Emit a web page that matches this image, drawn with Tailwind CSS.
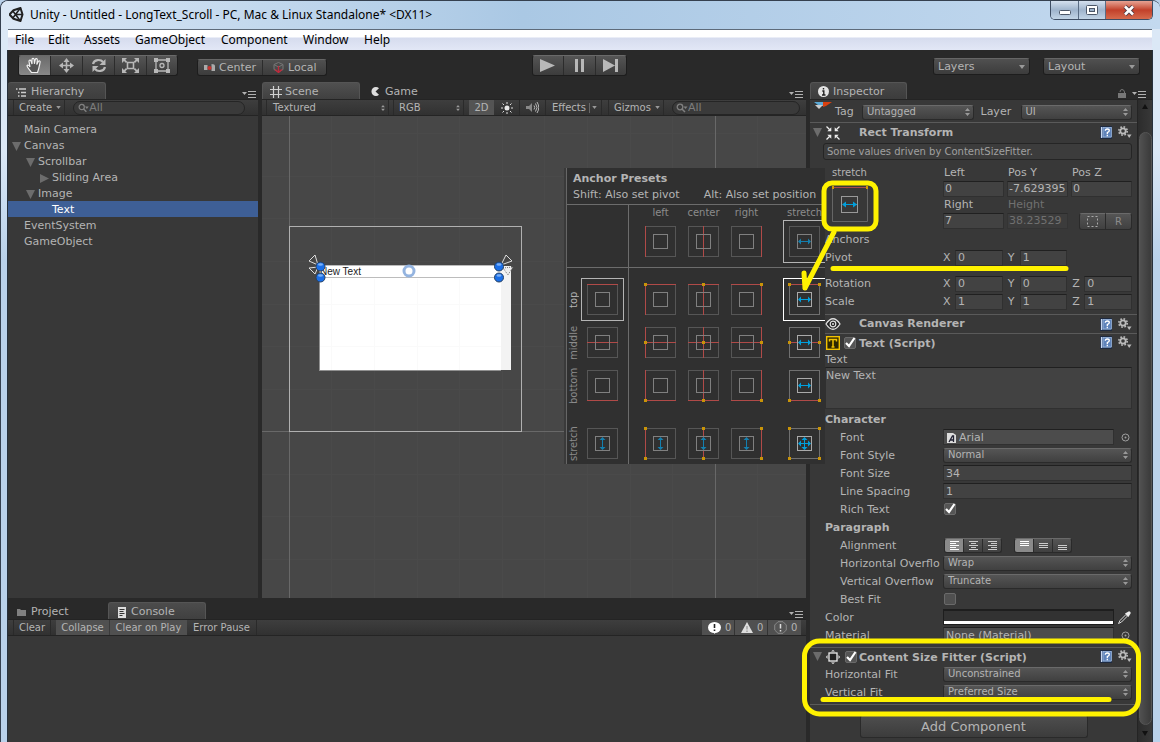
<!DOCTYPE html>
<html lang="en">
<head>
<meta charset="utf-8">
<title>Unity - Untitled - LongText_Scroll</title>
<script src="https://cdn.jsdelivr.net/npm/@tailwindcss/browser@4"></script>
</head>
<body class="bg-[#b9d1ea]">
<svg class="hidden" aria-hidden="true">
  <symbol id="updown" viewBox="0 0 5 8"><path d="M0 3 2.500 0 5 3zM0 5h5L2.500 8z" fill="#999"/></symbol>
  <symbol id="caret" viewBox="0 0 6 4"><path d="M0 0h6L3 4z" fill="#999"/></symbol>
  <symbol id="panelmenu" viewBox="0 0 14 7"><path d="M0 1h5L2.500 4z" fill="#b0b0b0"/><path d="M6 .5h8M6 3.500h8M6 6.500h8" stroke="#b0b0b0"/></symbol>
  <symbol id="foldopen" viewBox="0 0 9 9"><path d="M0 0h9L4.500 9z" fill="#6c6c6c"/></symbol>
  <symbol id="foldclosed" viewBox="0 0 9 9"><path d="M0 0v9L9 4.500z" fill="#6c6c6c"/></symbol>
  <symbol id="check" viewBox="0 0 12 12"><path d="M2 6 5 9 10.500 1" fill="none" stroke="#fff" stroke-width="2.200"/></symbol>
  <symbol id="book" viewBox="0 0 12 13"><rect x=".5" y=".5" width="11" height="12" fill="#47648f" stroke="#1e2a40"/><path d="M1.500 1v11" stroke="#c8d8f0" stroke-width="1.200"/><rect x="3" y="1.500" width="8.500" height="9.500" fill="#5f83ba" stroke="#a9c2e6" stroke-width=".7"/><path d="M5.300 4.800q0-1.800 2-1.800t2 1.700q0 1-2 1.900v1.400M7.300 8.800v1.400" stroke="#fff" fill="none" stroke-width="1.300"/></symbol>
  <symbol id="gear" viewBox="0 0 14 13"><circle cx="5" cy="5" r="2.700" fill="none" stroke="#bcbcbc" stroke-width="1.800"/><circle cx="5" cy="5" r="4.200" fill="none" stroke="#bcbcbc" stroke-width="1.600" stroke-dasharray="1.700 1.600"/><path d="M9 8.500h4.500L11.200 12z" fill="#bcbcbc"/></symbol>
  <symbol id="search" viewBox="0 0 12 10"><circle cx="4" cy="4" r="2.800" fill="none" stroke="#808080" stroke-width="1.300"/><path d="M6 6l3 3" stroke="#808080" stroke-width="1.500"/><path d="M7.500 3.500h4L9.500 6z" fill="#808080"/></symbol>
  <symbol id="target" viewBox="0 0 9 9"><circle cx="4.500" cy="4.500" r="3.500" fill="none" stroke="#a0a0a0"/><circle cx="4.500" cy="4.500" r="1" fill="#a0a0a0"/></symbol>
</svg>

<div class="relative flex h-screen w-full flex-col overflow-hidden rounded-t-lg border-t border-l border-[#35404f] bg-linear-to-b from-[#dbe8f6] from-20% via-[#b9d1ea] via-35% to-[#b9d1ea] pr-2 pl-[7px] font-['DejaVu_Sans',sans-serif] text-[11px] leading-4 text-[#b4b4b4]">

  <!-- window title -->
  <header class="-mr-2 -ml-[7px] flex h-7 shrink-0 items-start bg-linear-to-r from-[#dbe8f6] via-[#aac8e4] via-45% to-[#c3d9ef] pl-2">
    <svg class="mt-[6px] h-[15px] w-[15px]" viewBox="0 0 15 15"><path d="M.5 7.500 4.500 3.200 11.500 1l2 6.500-2 6.500-7-2.200z" fill="none" stroke="#222" stroke-width="2" stroke-linejoin="round"/><path d="M5.500 7.500H.8M5.500 7.500l5.800-6M5.500 7.500l5.800 6" stroke="#222" stroke-width="0"/><path d="M13 7.500H6.500M6.500 7.500 3.500 3.500M6.500 7.500l-3 4M6.500 7.500 11 1.500M6.500 7.500 11 13.500" stroke="#222" stroke-width="1.600"/></svg>
    <h1 class="mt-[5px] ml-1.5 flex-1 whitespace-nowrap font-['Noto_Sans',sans-serif] text-xs leading-[18px] text-black">Unity - Untitled - LongText_Scroll - PC, Mac &amp; Linux Standalone* &lt;DX11&gt;</h1>
    <div class="mr-[7px] flex h-[19px] overflow-hidden rounded-b-[5px] border border-t-0 border-[#3e4d63]">
      <button aria-label="Minimize" class="flex w-[28px] items-center justify-center border-r border-[#5a6c84] bg-linear-to-b from-[#d4e0ee] via-[#9fb4cc] to-[#c2d4e6] pt-1"><svg class="h-[5px] w-3" viewBox="0 0 12 5"><rect x=".5" y=".5" width="11" height="4" rx="1" fill="#fff" stroke="#4c5768"/></svg></button>
      <button aria-label="Maximize" class="flex w-[27px] items-center justify-center border-r border-[#5a6c84] bg-linear-to-b from-[#d4e0ee] via-[#9fb4cc] to-[#c2d4e6]"><svg class="h-2.5 w-3" viewBox="0 0 12 10"><rect x=".5" y=".5" width="11" height="9" rx="1" fill="#fff" stroke="#4c5768"/><rect x="3.500" y="3.500" width="5" height="3" fill="#9fb4cc" stroke="#4c5768"/></svg></button>
      <button aria-label="Close" class="flex w-[46px] items-center justify-center bg-linear-to-b from-[#e6a293] via-[#c2402a] to-[#d66a4c]"><svg class="h-[11px] w-3" viewBox="0 0 12 11"><path d="M2 1.500 10 9.500M10 1.500 2 9.500" stroke="#4c3a44" stroke-width="4.500"/><path d="M2 1.500 10 9.500M10 1.500 2 9.500" stroke="#fff" stroke-width="2.600"/></svg></button>
    </div>
  </header>

  <nav class="flex h-[21px] shrink-0 items-center border-t border-[#5e6b7a] bg-linear-to-b from-white from-35% via-[#d6dcee] via-40% to-[#e2e7f6] font-['Noto_Sans',sans-serif] text-xs text-black">
    <a href="#" class="ml-[7px] w-[33px]">File</a><a href="#" class="w-9">Edit</a><a href="#" class="w-[51px]">Assets</a><a href="#" class="w-[86px]">GameObject</a><a href="#" class="w-[82px]">Component</a><a href="#" class="w-[61px]">Window</a><a href="#">Help</a>
  </nav>

  <div class="-mx-px flex min-h-0 flex-1 flex-col border-x border-[#26303c] bg-[#292929]">
    <!-- main toolbar -->
    <div class="flex h-[31px] shrink-0 items-center pr-3 pl-[10px]">
      <div class="flex flex-1 items-center">
        <div class="flex h-[21px] overflow-hidden rounded-[3px] border border-[#1d1d1d] border-t-[#6a6a6a] bg-linear-to-b from-[#555] to-[#3c3c3c]">
          <button aria-label="Hand" class="flex w-[31px] items-center justify-center bg-linear-to-b from-[#6b6b6b] to-[#888]"><svg class="h-[17px] w-[17px]" viewBox="0 0 17 17"><path d="M5.500 15.500C4 13 1 10.500 1 8.800c.5-1.200 2-.5 3 1L3 4.500c-.2-1.500 1.500-1.800 2-.4l1 3V2.500c0-1.600 2-1.600 2.100 0l.3 4.300.9-4.300c.4-1.500 2.200-1 2 .5l-.5 4.500 1.500-3c.8-1.200 2.200-.5 1.800.9-.6 2.600-1.100 6.600-2.600 10.100z" fill="#555" stroke="#f0f0f0" stroke-width="1.200"/></svg></button>
          <button aria-label="Move" class="flex w-8 items-center justify-center border-l border-[#2c2c2c]"><svg class="h-[15px] w-[15px]" viewBox="0 0 15 15"><path d="M7.500 2v11M2 7.500h11" stroke="#b8b8b8" stroke-width="1.600"/><path d="M7.500 0 10.500 4h-6zM7.500 15l-3-4h6zM0 7.500l4-3v6zM15 7.500l-4-3v6z" fill="#b8b8b8"/></svg></button>
          <button aria-label="Rotate" class="flex w-8 items-center justify-center border-l border-[#2c2c2c]"><svg class="h-[15px] w-4" viewBox="0 0 16 15"><path d="M2 6C3 1.500 9.500.8 12 4M14 9c-1 4.500-7.500 5.200-10 2" stroke="#b8b8b8" stroke-width="2.200" fill="none"/><path d="M14.500 1v6H8.500zM1.500 14V8h6z" fill="#b8b8b8"/></svg></button>
          <button aria-label="Scale" class="flex w-8 items-center justify-center border-l border-[#2c2c2c]"><svg class="h-[17px] w-[19px]" viewBox="0 0 19 17"><path d="M6.500 5.500h6v6h-6z" fill="none" stroke="#b8b8b8" stroke-width="1.600"/><path d="M1 1h5L4.300 2.700l2 2-1.300 1.300-2-2L1 6zM18 1h-5l1.700 1.700-2 2L14 6l2-2 2 2zM1 16h5l-1.700-1.700 2-2L5 11l-2 2-2-2zM18 16h-5l1.700-1.700-2-2L14 11l2 2 2-2z" fill="#b8b8b8"/></svg></button>
          <button aria-label="Rect" class="flex w-[31px] items-center justify-center border-l border-[#2c2c2c]"><svg class="h-[17px] w-[18px]" viewBox="0 0 18 17"><path d="M3 3h12v11H3z" fill="none" stroke="#b8b8b8" stroke-width="1.300"/><path d="M1 1h4v4H1zM13 1h4v4h-4zM1 12h4v4H1zM13 12h4v4h-4z" fill="#b8b8b8"/><circle cx="9" cy="8.500" r="2" fill="none" stroke="#b8b8b8" stroke-width="1.300"/></svg></button>
        </div>
        <div class="mt-1 ml-[19px] flex h-[17px] overflow-hidden rounded-[3px] border border-[#1d1d1d] border-t-[#666] bg-linear-to-b from-[#505050] to-[#3c3c3c] leading-[15px]">
          <button class="flex w-[64px] items-center pl-1.5"><svg class="mr-1 h-2 w-[11px]" viewBox="0 0 11 8"><path d="M0 1h3.500v5H0z" fill="#aaa"/><path d="M7.500 0q3.500 0 3.500 2v5H7.500z" fill="#aaa"/><circle cx="5.500" cy="4" r="2" fill="#c8312d"/></svg>Center</button>
          <button class="flex w-16 items-center border-l border-[#2c2c2c] pl-2.5"><svg class="mr-1 h-[11px] w-[11px]" viewBox="0 0 11 11"><path d="M5.500.5 10 2.500v5L5.500 10 1 7.500v-5zM5.500 5v5M1 2.500l4.500 2.500L10 2.500" fill="#4a4a4a" stroke="#777"/><path d="M5.500 4v6M2 7.500 5.500 10.500 9 7.500" stroke="#c0283a" fill="none" stroke-width="1.300"/></svg>Local</button>
        </div>
      </div>
      <div class="flex h-[21px] overflow-hidden rounded-[3px] border border-[#1d1d1d] border-t-[#6a6a6a] bg-linear-to-b from-[#555] to-[#3c3c3c]">
        <button aria-label="Play" class="flex w-[30px] items-center justify-center"><svg class="h-[13px] w-[15px]" viewBox="0 0 15 13"><path d="M0 0v13l15-6.500z" fill="#b8b8b8"/></svg></button>
        <button aria-label="Pause" class="flex w-8 items-center justify-center border-l border-[#2c2c2c]"><svg class="h-[13px] w-[9px]" viewBox="0 0 9 13"><path d="M0 0h3v13H0zM6 0h3v13H6z" fill="#b8b8b8"/></svg></button>
        <button aria-label="Step" class="flex w-[31px] items-center justify-center border-l border-[#2c2c2c]"><svg class="h-[13px] w-[15px]" viewBox="0 0 15 13"><path d="M0 0v13l12-6.500zM12 0h3v13h-3z" fill="#b8b8b8"/></svg></button>
      </div>
      <div class="mt-0.5 flex flex-1 justify-end gap-[13px]">
        <button class="flex h-[17px] w-[97px] items-center justify-between rounded-[3px] border border-[#1d1d1d] border-t-[#666] bg-linear-to-b from-[#505050] to-[#3c3c3c] px-1">Layers<svg class="h-1 w-1.5"><use href="#caret"/></svg></button>
        <button class="flex h-[17px] w-[97px] items-center justify-between rounded-[3px] border border-[#1d1d1d] border-t-[#666] bg-linear-to-b from-[#505050] to-[#3c3c3c] px-1">Layout<svg class="h-1 w-1.5"><use href="#caret"/></svg></button>
      </div>
    </div>

    <div class="flex min-h-0 flex-1">
      <!-- left: hierarchy, scene, console -->
      <div class="flex min-w-0 flex-1 flex-col">
        <div class="flex min-h-0 flex-1">
          <section class="flex w-[250px] shrink-0 flex-col">
            <div class="flex h-[18px] shrink-0 items-end justify-between pr-0.5">
              <h2 class="flex h-[17px] w-[98px] items-center rounded-t-[3px] border-t border-r border-[#555] bg-linear-to-b from-[#484848] to-[#3e3e3e] pt-0.5 pl-2"><svg class="mr-[5px] h-[9px] w-[10px]" viewBox="0 0 10 9"><path d="M3 1h7M5 4.500h5M5 8h5" stroke="#ccc" stroke-width="1.300"/><path d="M0 1h1.500M2 4.500h1.500M2 8h1.500" stroke="#ccc" stroke-width="1.300"/></svg>Hierarchy</h2>
              <svg class="mb-px h-[7px] w-[14px]"><use href="#panelmenu"/></svg>
            </div>
            <div class="flex h-[17px] shrink-0 items-center border-y border-[#242424] bg-linear-to-b from-[#3e3e3e] to-[#313131] text-[10px] leading-[14px]">
              <button class="ml-[5px] flex h-full w-[52px] items-center justify-between border-x border-[#2a2a2a] pr-[3px] pl-[5px]">Create<svg class="h-[3px] w-[5px]"><use href="#caret" width="5" height="3"/></svg></button>
              <label class="ml-2 flex h-3.5 w-[172px] items-center rounded-full border border-[#252525] bg-[#3a3a3a] pl-1"><svg class="h-2.5 w-3"><use href="#search"/></svg><input aria-label="Search hierarchy" placeholder="All" class="w-full min-w-0 text-[11px] outline-none placeholder:text-[#7d7d7d]"></label>
            </div>
            <ul class="flex-1 bg-[#383838] pt-[5px] *:h-4 *:pt-0.5 *:leading-[14px]">
              <li class="pl-4">Main Camera</li>
              <li class="flex items-center pl-1"><svg class="mr-[3px] h-[9px] w-[9px]"><use href="#foldopen"/></svg>Canvas</li>
              <li class="flex items-center pl-[18px]"><svg class="mr-[3px] h-[9px] w-[9px]"><use href="#foldopen"/></svg>Scrollbar</li>
              <li class="flex items-center pl-8"><svg class="mr-[3px] h-[9px] w-[9px]"><use href="#foldclosed"/></svg>Sliding Area</li>
              <li class="flex items-center pl-[18px]"><svg class="mr-[3px] h-[9px] w-[9px]"><use href="#foldopen"/></svg>Image</li>
              <li class="bg-[#3e5f96] pl-11 text-white">Text</li>
              <li class="pl-4">EventSystem</li>
              <li class="pl-4">GameObject</li>
            </ul>
          </section>

          <section class="ml-1 flex min-w-0 flex-1 flex-col">
            <div class="flex h-[18px] shrink-0 items-end pr-[3px]">
              <h2 class="flex h-[17px] w-[98px] items-center rounded-t-[3px] border-x border-t border-[#555] bg-linear-to-b from-[#505050] to-[#404040] pt-0.5 pl-[7px]"><svg class="mr-[3px] h-3 w-3" viewBox="0 0 12 12"><path d="M3.500 0v12M8.500 0v12M0 3.500h12M0 8.500h12" stroke="#d0d0d0" stroke-width="1.200"/></svg>Scene</h2>
              <h2 class="ml-[11px] flex h-[17px] items-center pt-0.5"><svg class="mr-[5px] h-[9px] w-[9px]" viewBox="0 0 9 9"><path d="M8 1.200A4.500 4.500 0 1 0 8 7.800L4.500 4.500z" fill="#ddd"/></svg>Game</h2>
              <svg class="mb-px ml-auto h-[7px] w-[14px]"><use href="#panelmenu"/></svg>
            </div>
            <div class="flex h-[17px] shrink-0 items-center border-y border-[#242424] bg-linear-to-b from-[#3e3e3e] to-[#313131] text-[10px] leading-[14px]">
              <button class="ml-1 flex h-full w-[123px] shrink-0 items-center justify-between border-x border-[#2a2a2a] pr-[3px] pl-1.5">Textured<svg class="h-[6px] w-1"><use href="#updown"/></svg></button>
              <button class="ml-1 flex h-full w-[71px] shrink-0 items-center justify-between border-x border-[#2a2a2a] pr-[3px] pl-[5px]">RGB<svg class="h-[6px] w-1"><use href="#updown"/></svg></button>
              <button class="ml-[5px] h-full w-[25px] bg-[#545454]">2D</button>
              <button aria-label="Lighting" class="flex h-full w-[26px] items-center justify-center border-r border-[#2a2a2a]"><svg class="h-3 w-3" viewBox="0 0 12 12"><circle cx="6" cy="6" r="2.500" fill="#e8e8e8"/><path d="M6 0v2M6 10v2M0 6h2M10 6h2M1.500 1.500 3 3M9 9l1.500 1.500M10.500 1.500 9 3M3 9l-1.500 1.500" stroke="#ddd"/></svg></button>
              <button aria-label="Audio" class="flex h-full w-[26px] items-center justify-center border-r border-[#2a2a2a]"><svg class="h-[11px] w-[13px]" viewBox="0 0 13 11"><path d="M0 4h3l3-3v9L3 7H0z" fill="#888"/><path d="M8 3.500q1.500 2 0 4M9.500 1.500q3 4 0 8M11 0q3.500 5.500 0 11" fill="none" stroke="#bbb"/></svg></button>
              <button class="flex h-full w-[56px] shrink-0 items-center border-r border-[#2a2a2a] pr-1 pl-1.5">Effects<span class="ml-auto h-2.5 border-l border-[#666]"></span><svg class="ml-0.5 h-[3px] w-[5px]"><use href="#caret" width="5" height="3"/></svg></button>
              <button class="ml-1.5 flex h-full w-[56px] shrink-0 items-center justify-between border-x border-[#2a2a2a] pr-[3px] pl-[5px]">Gizmos<svg class="h-[3px] w-[5px]"><use href="#caret" width="5" height="3"/></svg></button>
              <label class="mr-1.5 ml-2 flex h-3.5 min-w-0 flex-1 items-center rounded-full border border-[#252525] bg-[#3a3a3a] pl-[3px]"><svg class="h-2.5 w-3 shrink-0"><use href="#search"/></svg><input aria-label="Search scene" placeholder="All" class="w-full min-w-0 text-[11px] outline-none placeholder:text-[#7d7d7d]"></label>
            </div>
            <div class="min-h-0 flex-1 overflow-hidden bg-[#474747]">
              <svg class="h-full w-full" role="img" aria-label="Scene view">
                <g stroke="#4a4a4a"><path d="M69.500 0v600M112.500 0v600M155.500 0v600M197.500 0v600M240.500 0v600M282.500 0v600M325.500 0v600M368.500 0v600M410.500 0v600M495.500 0v600M0 17.500h1200M0 60.500h1200M0 102.500h1200M0 145.500h1200M0 188.500h1200M0 230.500h1200M0 273.500h1200M0 358.500h1200M0 400.500h1200M0 443.500h1200"/></g>
                <path d="M27.500 0v2000M453.500 0v2000M0 315.500h2000" stroke="#686868"/>
                <rect x="27.500" y="110.500" width="232" height="205" fill="none" stroke="#b0b0b0"/>
                <rect x="57" y="149" width="182" height="106" fill="#909090"/>
                <rect x="58" y="149" width="181" height="105" fill="#fff"/>
                <rect x="239" y="150" width="10" height="104" fill="#f3f3f3"/>
                <path d="M69.500 163v91M112.500 163v91M155.500 163v91M197.500 163v91M58 188.500h181M58 230.500h181" stroke="#fafafa"/>
                <path d="M58 149.500h181M58 161.500h181" stroke="#bcbcbc" stroke-width="1.200"/>
                <text x="58" y="159" font-family="Liberation Sans" font-size="10" fill="#222">New Text</text>
                <g fill="none" stroke="#ddd" stroke-width="1"><path d="M56 149l-9-4 6-6zM56 151l-9 1 6 6zM239 149l5-10 6 6z"/><path d="M241 152l10-1-5 8z" fill="#eee" stroke="#777" stroke-dasharray="1 1"/></g>
                <circle cx="147" cy="155" r="5" fill="#fff" stroke="#94b4e0" stroke-width="3"/>
                <g fill="#1a6fe8" stroke="#27405f"><circle cx="58.500" cy="150.500" r="4.500"/><circle cx="58.500" cy="161.500" r="4.500"/><circle cx="237" cy="150.500" r="4.500"/><circle cx="237" cy="161.500" r="4.500"/></g>
                <g fill="#7ab0f6"><ellipse cx="58.500" cy="148.500" rx="2.500" ry="1.300"/><ellipse cx="58.500" cy="159.500" rx="2.500" ry="1.300"/><ellipse cx="237" cy="148.500" rx="2.500" ry="1.300"/><ellipse cx="237" cy="159.500" rx="2.500" ry="1.300"/></g>
              </svg>
            </div>
          </section>
        </div>

        <section class="flex h-[144px] shrink-0 flex-col">
          <div class="flex h-[21px] shrink-0 items-end pr-[3px]">
            <h2 class="flex h-[17px] w-[100px] items-center pt-0.5 pl-[9px]"><svg class="mr-[5px] h-2 w-[9px]" viewBox="0 0 9 8"><path d="M0 1h3l1 1h5v6H0z" fill="#808080"/></svg>Project</h2>
            <h2 class="flex h-[17px] w-[98px] items-center rounded-t-[3px] border-x border-t border-[#555] bg-linear-to-b from-[#4c4c4c] to-[#404040] pt-0.5 pl-[9px]"><svg class="mr-[5px] h-[11px] w-2" viewBox="0 0 8 11"><path d="M0 0h8v11H0z" fill="#ddd"/><path d="M1.500 2.500h5M1.500 4.500h4M1.500 6.500h5M1.500 8.500h3" stroke="#333"/></svg>Console</h2>
            <svg class="mb-px ml-auto h-[7px] w-[14px]"><use href="#panelmenu"/></svg>
          </div>
          <div class="flex h-[17px] shrink-0 items-center border-y border-[#242424] bg-linear-to-b from-[#3e3e3e] to-[#313131] pr-[5px] text-[10px] leading-[14px]">
            <button class="ml-[5px] h-full w-[38px] border-x border-[#2a2a2a]">Clear</button>
            <button class="ml-[5px] h-full w-[54px] border-r border-[#3a3a3a] bg-[#505050]">Collapse</button>
            <button class="h-full w-[77px] bg-[#505050]">Clear on Play</button>
            <button class="h-full w-[70px] border-r border-[#2a2a2a]">Error Pause</button>
            <button class="ml-auto flex h-full w-[33px] items-center gap-1 border-r border-[#333] bg-[#505050] pl-1.5"><svg class="h-3 w-[13px]" viewBox="0 0 13 12"><ellipse cx="6.500" cy="5.500" rx="6.500" ry="5.500" fill="#fff"/><path d="M5 9l1.500 3L9 9z" fill="#fff"/><path d="M6.500 2v4M6.500 7.500V9" stroke="#222" stroke-width="1.600"/></svg>0</button>
            <button class="flex h-full w-[33px] items-center gap-1 border-r border-[#333] bg-[#505050] pl-1.5"><svg class="h-[11px] w-3" viewBox="0 0 12 11"><path d="M6 0l6 11H0z" fill="#ddd"/><path d="M6 4v3.500M6 8.500V10" stroke="#999" stroke-width="1.300"/></svg>0</button>
            <button class="flex h-full w-[33px] items-center gap-1 bg-[#505050] pl-1.5"><svg class="h-[13px] w-[13px]" viewBox="0 0 13 13"><path d="M4 .7h5L12.300 4v5L9 12.300H4L.7 9V4z" fill="#555" stroke="#888"/><path d="M6.500 3v4.500M6.500 9v1.500" stroke="#ddd" stroke-width="1.500"/></svg>0</button>
          </div>
          <div class="flex-1 bg-[#383838]"></div>
        </section>
      </div>

      <!-- inspector -->
      <section class="ml-1 flex w-[342px] shrink-0 flex-col">
        <div class="flex h-[18px] shrink-0 items-end pr-1.5">
          <h2 class="flex h-[17px] w-[97px] items-center rounded-t-[3px] border-x border-t border-[#555] bg-linear-to-b from-[#484848] to-[#3c3c3c] pt-0.5 pl-[7px]"><svg class="-mt-0.5 mr-1 h-[11px] w-[11px]" viewBox="0 0 11 11"><circle cx="5.500" cy="5.500" r="5.500" fill="#e4e4e4"/><path d="M5.500 2v1.500M4.300 5h1.500v4M4 9h3.500" stroke="#222" stroke-width="1.400" fill="none"/></svg>Inspector</h2>
          <svg class="mb-px ml-auto h-[9px] w-2" viewBox="0 0 8 9"><path d="M0 4h8v5H0z" fill="#777"/><path d="M2 3q0-2.500 2-2.500T6.500 3v2" fill="none" stroke="#777"/></svg>
          <svg class="mb-px ml-1.5 h-[7px] w-[14px]"><use href="#panelmenu"/></svg>
        </div>
        <div class="flex min-h-0 flex-1 border-t border-[#242424]">
          <div class="min-w-0 flex-1 overflow-hidden bg-[#383838] pt-[3px]">
            <div class="flex h-4.5 items-center pr-[5px] pl-1">
              <svg class="-mt-3 h-2 w-[18px] shrink-0" viewBox="0 0 18 8"><path d="M0 0h9v4L4 3z" fill="#5aa9d6"/><path d="M9 0h9l-6 4-3 1z" fill="#d9400f"/><path d="M1 3h8L5 7z" fill="#ccc"/></svg>
              <label for="tag" class="w-[30px] pl-[3px]">Tag</label>
              <span class="relative flex-1"><select id="tag" class="block h-[15px] w-full appearance-none rounded-[3px] border border-[#2a2a2a] border-t-[#6a6a6a] bg-linear-to-b from-[#555] to-[#404040] pl-1 text-[10px] leading-3"><option>Untagged</option></select><svg class="absolute top-[3px] right-1 h-2 w-[5px]"><use href="#updown"/></svg></span>
              <label for="layer" class="w-[47px] pl-[7px]">Layer</label>
              <span class="relative flex-1"><select id="layer" class="block h-[15px] w-full appearance-none rounded-[3px] border border-[#2a2a2a] border-t-[#6a6a6a] bg-linear-to-b from-[#555] to-[#404040] pl-1 text-[10px] leading-3"><option>UI</option></select><svg class="absolute top-[3px] right-1 h-2 w-[5px]"><use href="#updown"/></svg></span>
            </div>

            <div class="mt-px flex h-[21px] items-center border-t border-[#5a5a5a] pr-[5px] pb-px pl-[3px]">
              <svg class="h-[9px] w-[9px]"><use href="#foldopen"/></svg>
              <svg class="ml-1 h-[14px] w-[14px]" viewBox="0 0 14 14"><path d="M5.300 5.300V1.300L1.300 5.300zM8.700 5.300V1.300l4 4zM5.300 8.700v4l-4-4zM8.700 8.700v4l4-4z" fill="#eee"/><path d="M.5.500l3 3M13.500.500l-3 3M.5 13.500l3-3M13.500 13.500l-3-3" stroke="#eee" stroke-width="1.300"/></svg>
              <h3 class="ml-[19px] flex-1 font-bold">Rect Transform</h3>
              <svg class="h-[13px] w-3"><use href="#book"/></svg><svg class="ml-1.5 h-[13px] w-[14px]"><use href="#gear"/></svg>
            </div>
            <p class="mr-[5px] ml-[13px] h-[17px] rounded-[3px] border border-[#252525] bg-[#3c3c3c] pl-[3px] text-[10px] leading-[15px] text-[#a0a0a0]">Some values driven by ContentSizeFitter.</p>

            <div class="mt-[5px] flex pr-[5px] pl-[15px]">
              <div class="w-[118px] shrink-0">
                <p class="pl-[7px] text-[10px] leading-4">stretch</p>
                <button aria-label="Anchor presets" class="mt-[5px] ml-[7px] block"><svg class="h-9 w-9" viewBox="0 0 36 36"><path d="M.5.5v35h35V.5" fill="none" stroke="#666"/><path d="M0 1.500h36" stroke="#a84b48"/><path d="M0 0h2v3H0zM34 0h2v3h-2z" fill="#d09a00"/><rect x="9.500" y="10.500" width="16" height="16" fill="none" stroke="#999"/><path d="M11 18.500h14" stroke="#009fdc"/><path d="M10 18.500l4-3v6zM25 18.500l-4-3v6z" fill="#009fdc"/></svg></button>
              </div>
              <div class="grid flex-1 grid-cols-3 gap-x-[3px] *:h-4">
                <label for="left" class="pl-px">Left</label><label for="posy" class="pl-px">Pos Y</label><label for="posz" class="pl-px">Pos Z</label>
                <input id="left" value="0" class="w-full min-w-0 border border-[#303030] border-t-[#202020] bg-[#424242] pl-px"><input id="posy" value="-7.629395" class="w-full min-w-0 border border-[#303030] border-t-[#202020] bg-[#424242] pl-px"><input id="posz" value="0" class="w-full min-w-0 border border-[#303030] border-t-[#202020] bg-[#424242] pl-px">
                <label for="right" class="pl-px">Right</label><label for="height" class="pl-px text-[#707070]">Height</label><span></span>
                <input id="right" value="7" class="w-full min-w-0 border border-[#303030] border-t-[#202020] bg-[#424242] pl-px"><input id="height" value="38.23529" disabled class="w-full min-w-0 border border-[#343434] border-t-[#2c2c2c] bg-[#3c3c3c] pl-px text-[#707070]">
                <div class="flex pl-2"><button aria-label="Blueprint mode" class="flex h-[17px] flex-1 items-center justify-center rounded-l-[3px] border border-[#2a2a2a] border-t-[#6a6a6a] bg-linear-to-b from-[#555] to-[#404040]"><svg class="h-[11px] w-[11px]" viewBox="0 0 11 11"><rect x=".5" y=".5" width="10" height="10" fill="none" stroke="#aaa" stroke-dasharray="2 2"/></svg></button><button class="h-[17px] flex-1 rounded-r-[3px] border border-l-0 border-[#2a2a2a] border-t-[#6a6a6a] bg-linear-to-b from-[#555] to-[#404040] text-[10px] leading-[15px] text-[#8c8c8c]">R</button></div>
              </div>
            </div>
            <div class="mt-0.5 h-4.5 pl-[15px] leading-[18px]">Anchors</div>

            <div class="flex h-4.5 items-center pr-[5px] pl-[15px]">
              <span class="w-[118px]">Pivot</span>
              <div class="grid flex-1 grid-cols-3 gap-x-[5px]">
                <label class="flex h-4"><span class="w-3">X</span><input value="0" class="min-w-0 flex-1 border border-[#303030] border-t-[#202020] bg-[#424242] pl-0.5"></label>
                <label class="flex h-4"><span class="w-3">Y</span><input value="1" class="min-w-0 flex-1 border border-[#303030] border-t-[#202020] bg-[#424242] pl-0.5"></label>
              </div>
            </div>
            <div class="mt-2 flex h-4.5 items-center pr-[5px] pl-[15px]">
              <span class="w-[118px]">Rotation</span>
              <div class="grid flex-1 grid-cols-3 gap-x-[5px]">
                <label class="flex h-4"><span class="w-3">X</span><input value="0" class="min-w-0 flex-1 border border-[#303030] border-t-[#202020] bg-[#424242] pl-0.5"></label>
                <label class="flex h-4"><span class="w-3">Y</span><input value="0" class="min-w-0 flex-1 border border-[#303030] border-t-[#202020] bg-[#424242] pl-0.5"></label>
                <label class="flex h-4"><span class="w-3">Z</span><input value="0" class="min-w-0 flex-1 border border-[#303030] border-t-[#202020] bg-[#424242] pl-0.5"></label>
              </div>
            </div>
            <div class="flex h-4.5 items-center pr-[5px] pl-[15px]">
              <span class="w-[118px]">Scale</span>
              <div class="grid flex-1 grid-cols-3 gap-x-[5px]">
                <label class="flex h-4"><span class="w-3">X</span><input value="1" class="min-w-0 flex-1 border border-[#303030] border-t-[#202020] bg-[#424242] pl-0.5"></label>
                <label class="flex h-4"><span class="w-3">Y</span><input value="1" class="min-w-0 flex-1 border border-[#303030] border-t-[#202020] bg-[#424242] pl-0.5"></label>
                <label class="flex h-4"><span class="w-3">Z</span><input value="1" class="min-w-0 flex-1 border border-[#303030] border-t-[#202020] bg-[#424242] pl-0.5"></label>
              </div>
            </div>

            <div class="mt-[3px] flex h-[19px] items-center border-t border-[#5a5a5a] pr-[5px] pl-[15px]">
              <svg class="h-3 w-4" viewBox="0 0 16 12"><path d="M1 6Q8-4.500 15 6 8 16.500 1 6z" fill="#222" stroke="#e0e0e0" stroke-width="1.300"/><circle cx="8" cy="6" r="2.800" fill="none" stroke="#e0e0e0" stroke-width="1.200"/><circle cx="8" cy="6" r="1" fill="#e0e0e0"/></svg>
              <h3 class="ml-[18px] flex-1 font-bold">Canvas Renderer</h3>
              <svg class="h-[13px] w-3"><use href="#book"/></svg><svg class="ml-1.5 h-[13px] w-[14px]"><use href="#gear"/></svg>
            </div>
            <div class="flex h-[20px] items-center border-t border-[#5a5a5a] pr-[5px] pb-0.5 pl-4">
              <svg class="h-[14px] w-[14px]" viewBox="0 0 14 14"><rect x=".7" y=".7" width="12.600" height="12.600" fill="#2c2600" stroke="#f2c200" stroke-width="1.400"/><path d="M3.500 5.500v-2h7v2M7 3.500V11M5.500 11h3" stroke="#f2c200" stroke-width="1.500" fill="none"/></svg>
              <span class="relative ml-1 h-3 w-3"><input id="textOn" type="checkbox" checked aria-label="Text enabled" class="block h-3 w-3 appearance-none rounded-[2px] border border-[#6a6a6a] bg-[#555]"><svg class="pointer-events-none absolute top-0 left-0 h-3 w-3"><use href="#check"/></svg></span>
              <h3 class="ml-[3px] flex-1 pt-0.5 font-bold">Text (Script)</h3>
              <svg class="h-[13px] w-3"><use href="#book"/></svg><svg class="ml-1.5 h-[13px] w-[14px]"><use href="#gear"/></svg>
            </div>
            <div class="flex flex-col pr-[5px] pl-[15px]">
              <label for="text" class="h-[14px] leading-[14px]">Text</label>
              <textarea id="text" class="block h-[42px] resize-none border border-[#303030] border-t-[#202020] bg-[#424242] leading-[15px]">New Text</textarea>
            </div>

            <div class="mt-px pr-[5px] pl-[15px] *:flex *:h-4.5 *:items-center [&_label]:pt-0.5">
              <h4 class="pt-0.5 font-bold">Character</h4>
              <div><label for="font" class="w-[118px] shrink-0 pl-[15px]">Font</label><button id="font" class="flex h-4 w-[171px] items-center border border-[#303030] border-t-[#202020] bg-[#4c4c4c] pt-px pl-[3px]"><svg class="mr-[3px] h-2.5 w-[9px]" viewBox="0 0 9 10"><path d="M0 0h6l3 2v8H0z" fill="#ddd"/><path d="M2 9 5.500 3h1V9M3.500 7h3" stroke="#223" fill="none" stroke-width="1.300"/></svg>Arial</button><svg class="mr-0.5 ml-auto h-[9px] w-[9px]"><use href="#target"/></svg></div>
              <div><label for="fstyle" class="w-[118px] shrink-0 pl-[15px]">Font Style</label><span class="relative flex-1"><select id="fstyle" class="block h-[15px] w-full appearance-none rounded-[3px] border border-[#2a2a2a] border-t-[#6a6a6a] bg-linear-to-b from-[#555] to-[#404040] pl-1 text-[10px] leading-3"><option>Normal</option></select><svg class="absolute top-[3px] right-1 h-2 w-[5px]"><use href="#updown"/></svg></span></div>
              <div><label for="fsize" class="w-[118px] shrink-0 pl-[15px]">Font Size</label><input id="fsize" value="34" class="h-4 min-w-0 flex-1 border border-[#303030] border-t-[#202020] bg-[#424242] pt-px pl-0.5"></div>
              <div><label for="lsp" class="w-[118px] shrink-0 pl-[15px]">Line Spacing</label><input id="lsp" value="1" class="h-4 min-w-0 flex-1 border border-[#303030] border-t-[#202020] bg-[#424242] pt-px pl-0.5"></div>
              <div><label for="rich" class="w-[118px] shrink-0 pl-[15px]">Rich Text</label><span class="relative ml-px h-3 w-3"><input id="rich" type="checkbox" checked class="block h-3 w-3 appearance-none rounded-[2px] border border-[#6a6a6a] bg-[#555]"><svg class="pointer-events-none absolute top-0 left-0 h-3 w-3"><use href="#check"/></svg></span></div>
              <h4 class="pt-0.5 font-bold">Paragraph</h4>
              <div><span class="w-[118px] shrink-0 pt-0.5 pl-[15px]">Alignment</span>
                <span class="ml-px flex h-[15px] overflow-hidden rounded-[3px] border border-[#2a2a2a] border-t-[#6a6a6a] bg-linear-to-b from-[#555] to-[#404040]">
                  <button aria-label="Align left" class="flex w-[18px] items-center justify-center bg-[#8a8a8a]"><svg class="h-[9px] w-[9px]" viewBox="0 0 9 9"><path d="M0 .5h9M0 2.500h6M0 4.500h9M0 6.500h6M0 8.500h9" stroke="#fff"/></svg></button>
                  <button aria-label="Align center" class="flex w-5 items-center justify-center border-x border-[#2c2c2c]"><svg class="h-[9px] w-[9px]" viewBox="0 0 9 9"><path d="M0 .5h9M2 2.500h5M0 4.500h9M2 6.500h5M0 8.500h9" stroke="#ccc"/></svg></button>
                  <button aria-label="Align right" class="flex w-[18px] items-center justify-center"><svg class="h-[9px] w-[9px]" viewBox="0 0 9 9"><path d="M0 .5h9M3 2.500h6M0 4.500h9M3 6.500h6M0 8.500h9" stroke="#ccc"/></svg></button>
                </span>
                <span class="ml-3 flex h-[15px] overflow-hidden rounded-[3px] border border-[#2a2a2a] border-t-[#6a6a6a] bg-linear-to-b from-[#555] to-[#404040]">
                  <button aria-label="Align top" class="flex w-[18px] items-start justify-center bg-[#8a8a8a] pt-0.5"><svg class="h-[5px] w-[9px]" viewBox="0 0 9 5"><path d="M0 .5h9M0 2.500h9M0 4.500h9" stroke="#fff"/></svg></button>
                  <button aria-label="Align middle" class="flex w-5 items-center justify-center border-x border-[#2c2c2c]"><svg class="h-[5px] w-[9px]" viewBox="0 0 9 5"><path d="M0 .5h9M0 2.500h9M0 4.500h9" stroke="#ccc"/></svg></button>
                  <button aria-label="Align bottom" class="flex w-[18px] items-end justify-center pb-0.5"><svg class="h-[5px] w-[9px]" viewBox="0 0 9 5"><path d="M0 .5h9M0 2.500h9M0 4.500h9" stroke="#ccc"/></svg></button>
                </span></div>
              <div><label for="hov" class="w-[118px] shrink-0 pl-[15px] whitespace-nowrap">Horizontal Overflo</label><span class="relative flex-1"><select id="hov" class="block h-[15px] w-full appearance-none rounded-[3px] border border-[#2a2a2a] border-t-[#6a6a6a] bg-linear-to-b from-[#555] to-[#404040] pl-1 text-[10px] leading-3"><option>Wrap</option></select><svg class="absolute top-[3px] right-1 h-2 w-[5px]"><use href="#updown"/></svg></span></div>
              <div><label for="vov" class="w-[118px] shrink-0 pl-[15px] whitespace-nowrap">Vertical Overflow</label><span class="relative flex-1"><select id="vov" class="block h-[15px] w-full appearance-none rounded-[3px] border border-[#2a2a2a] border-t-[#6a6a6a] bg-linear-to-b from-[#555] to-[#404040] pl-1 text-[10px] leading-3"><option>Truncate</option></select><svg class="absolute top-[3px] right-1 h-2 w-[5px]"><use href="#updown"/></svg></span></div>
              <div><label for="fit" class="w-[118px] shrink-0 pl-[15px]">Best Fit</label><input id="fit" type="checkbox" class="ml-px block h-3 w-3 appearance-none rounded-[2px] border border-[#6a6a6a] bg-[#505050]"></div>
              <div><label for="color" class="w-[118px] shrink-0">Color</label><button id="color" aria-label="Color" class="flex h-4 w-[171px] flex-col justify-end border border-t-2 border-[#1e1e1e] bg-[#323232]"><span class="block h-[3px] w-full bg-white"></span></button><svg class="mr-px ml-auto h-[13px] w-[13px]" viewBox="0 0 13 13"><path d="M.5 12.500 2 9.500l6-6 1.500 1.500-6 6z" fill="#333" stroke="#ddd"/><path d="M7 2.500l3.500 3.500 2.300-4Q12.300.3 11 .3z" fill="#eee"/></svg></div>
              <div><label for="mat" class="w-[118px] shrink-0">Material</label><button id="mat" class="h-4 w-[171px] border border-[#303030] border-t-[#202020] bg-[#4c4c4c] pl-0.5 text-left leading-[15px]">None (Material)</button><svg class="mr-0.5 ml-auto h-[9px] w-[9px]"><use href="#target"/></svg></div>
            </div>

            <div class="mt-[3px] flex h-[18px] items-center border-t border-[#5a5a5a] pr-[5px] pl-[3px]">
              <svg class="h-[9px] w-[9px]"><use href="#foldopen"/></svg>
              <svg class="ml-1 h-[14px] w-[14px]" viewBox="0 0 14 14"><rect x="3" y="3" width="8" height="8" fill="#222" stroke="#eee" stroke-width="1.300"/><path d="M7 0 5 1.500h4zM7 14l-2-1.500h4zM0 7l1.500-2v4zM14 7l-1.500-2v4z" fill="#eee"/></svg>
              <span class="relative ml-[5px] h-3 w-3"><input id="csf" type="checkbox" checked aria-label="Content Size Fitter enabled" class="block h-3 w-3 appearance-none rounded-[2px] border border-[#6a6a6a] bg-[#555]"><svg class="pointer-events-none absolute top-0 left-0 h-3 w-3"><use href="#check"/></svg></span>
              <h3 class="ml-0.5 flex-1 pt-0.5 font-bold">Content Size Fitter (Script)</h3>
              <svg class="h-[13px] w-3"><use href="#book"/></svg><svg class="ml-1.5 h-[13px] w-[14px]"><use href="#gear"/></svg>
            </div>
            <div class="border-b border-[#5a5a5a] pr-[5px] pb-[3px] pl-[15px] *:flex *:h-4.5 *:items-center [&_label]:pt-0.5">
              <div><label for="hfit" class="w-[118px] shrink-0">Horizontal Fit</label><span class="relative flex-1"><select id="hfit" class="block h-[15px] w-full appearance-none rounded-[3px] border border-[#2a2a2a] border-t-[#6a6a6a] bg-linear-to-b from-[#555] to-[#404040] pl-1 text-[10px] leading-3"><option>Unconstrained</option></select><svg class="absolute top-[3px] right-1 h-2 w-[5px]"><use href="#updown"/></svg></span></div>
              <div><label for="vfit" class="w-[118px] shrink-0">Vertical Fit</label><span class="relative flex-1"><select id="vfit" class="block h-[15px] w-full appearance-none rounded-[3px] border border-[#2a2a2a] border-t-[#6a6a6a] bg-linear-to-b from-[#555] to-[#404040] pl-1 text-[10px] leading-3"><option>Preferred Size</option></select><svg class="absolute top-[3px] right-1 h-2 w-[5px]"><use href="#updown"/></svg></span></div>
            </div>
            <button class="mx-auto mt-2.5 block h-[23px] w-[228px] rounded-[3px] border border-[#2a2a2a] border-t-[#666] bg-linear-to-b from-[#4e4e4e] to-[#3c3c3c] text-[13px] leading-[18px]">Add Component</button>
          </div>
          <!-- scrollbar -->
          <div class="flex w-[15px] flex-col items-center border-l border-[#242424] bg-linear-to-r from-[#2c2c2c] to-[#383838]">
            <svg class="mt-1 h-[5px] w-1.5" viewBox="0 0 6 5"><path d="M3 0l3 5H0z" fill="#111"/></svg>
            <div class="mt-[23px] w-[13px] flex-1 rounded-full border border-[#555] bg-linear-to-r from-[#505050] to-[#3a3a3a]"></div>
            <svg class="my-1.5 h-[5px] w-1.5" viewBox="0 0 6 5"><path d="M0 0h6L3 5z" fill="#111"/></svg>
          </div>
        </div>
      </section>
    </div>
  </div>

  <!-- anchor presets popup -->
  <div class="absolute top-[167px] right-[335px] h-[296px] w-[261px] overflow-hidden bg-[#3a3a3a] pl-0.5">
    <div class="h-full border-l border-[#666] bg-[#303030]">
      <div class="h-[37px] border-b border-[#6c6c6c] pt-[3px] pl-1.5 whitespace-nowrap">
        <h3 class="font-bold">Anchor Presets</h3>
        <p class="flex gap-6"><span>Shift: Also set pivot</span><span>Alt: Also set position</span></p>
      </div>
      <div id="presets" class="grid grid-cols-[14px_43px_15px_43px_43px_43px_15px_43px] grid-rows-[15px_43px_15px_43px_43px_43px_15px_43px] text-[10px] text-[#8c8c8c]">
        <div class="col-start-3 row-span-8 row-start-1 ml-1 border-l border-[#6c6c6c]"></div>
        <div class="col-span-8 col-start-1 row-start-3 mt-1 border-t border-[#6c6c6c]"></div>
        <span class="col-start-4 row-start-1 text-center">left</span><span class="col-start-5 row-start-1 text-center">center</span><span class="col-start-6 row-start-1 text-center">right</span><span class="col-start-8 row-start-1 flex justify-center">stretch</span>
        <span class="col-start-1 row-start-4 flex rotate-180 items-center justify-center text-[#b4b4b4] [writing-mode:vertical-rl]">top</span><span class="col-start-1 row-start-5 flex rotate-180 items-center justify-center [writing-mode:vertical-rl]">middle</span><span class="col-start-1 row-start-6 flex rotate-180 items-center justify-center [writing-mode:vertical-rl]">bottom</span><span class="col-start-1 row-start-8 flex rotate-180 items-center justify-center [writing-mode:vertical-rl]">stretch</span>
      </div>
    </div>
  </div>

  <!-- highlighter marks -->
  <svg class="pointer-events-none absolute top-[-1px] right-0 h-[742px] w-[360px]" viewBox="800 0 360 742" fill="none" stroke="#fff200" stroke-width="5" stroke-linecap="round" stroke-linejoin="round" aria-hidden="true">
    <rect x="824" y="183" width="52" height="46" rx="8"/>
    <path d="M834 232 805 288M804 273l1 15M833 268.500h233"/>
    <rect x="804.500" y="641" width="334" height="73" rx="15"/>
    <path d="M823 699.500h286"/>
  </svg>
</div>

<script>
  // Draws each anchor preset tile into the grid.
  const cols = { none: 2, left: 4, center: 5, right: 6, stretch: 8 };
  const rows = { none: 2, top: 4, middle: 5, bottom: 6, stretch: 8 };
  const pos = { left: [6.5], center: [21.5], right: [36.5], top: [6.5], middle: [21.5], bottom: [36.5], stretch: [6.5, 36.5], none: [] };
  const grid = document.getElementById('presets');
  for (const h in cols) for (const v in rows) {
    if (h === 'none' && v === 'none') continue;
    const bright = h === 'stretch' && v !== 'none';
    const blue = bright ? '#009fdc' : '#147fae';
    let s = `<rect x="6.5" y="6.5" width="30" height="30" fill="none" stroke="${bright ? '#707070' : '#565656'}"/>`;
    if (h !== 'stretch') pos[h].forEach(x => s += `<path d="M${x} 6v31" stroke="#b04a48"/>`);
    if (v !== 'stretch') pos[v].forEach(y => s += `<path d="M6 ${y}h31" stroke="#b04a48"/>`);
    s += `<rect x="14.5" y="14.5" width="14" height="14" fill="none" stroke="${bright ? '#aaa' : '#808080'}"/>`;
    if (h === 'stretch') s += `<path d="M16 21.5h11" stroke="${blue}"/><path d="M15 21.500l3-3v6zM28 21.500l-3-3v6z" fill="${blue}"/>`;
    if (v === 'stretch') s += `<path d="M21.5 16v11" stroke="${blue}"/><path d="M21.500 15l3 3h-6zM21.500 28l3-3h-6z" fill="${blue}"/>`;
    pos[h].forEach(x => pos[v].forEach(y => s += `<rect x="${x - 1.5}" y="${y - 1.5}" width="3" height="3" fill="#c99408"/>`));
    if ((h === 'none' && v === 'top') || (h === 'stretch' && v === 'none')) s += '<rect x=".5" y=".5" width="42" height="42" fill="none" stroke="#b4b4b4"/>';
    if (h === 'stretch' && v === 'top') s += '<rect x=".5" y=".5" width="42" height="42" fill="none" stroke="#fff"/>';
    grid.insertAdjacentHTML('beforeend', `<button aria-label="Anchor ${h} ${v}" style="grid-column:${cols[h]};grid-row:${rows[v]}"><svg class="block h-[43px] w-[43px]" viewBox="0 0 43 43">${s}</svg></button>`);
  }
</script>
</body>
</html>
